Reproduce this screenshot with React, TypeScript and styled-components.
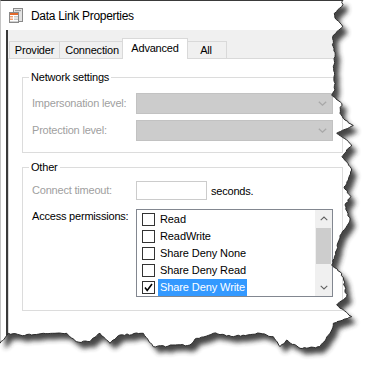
import React from "react";
import styled, { createGlobalStyle } from "styled-components";

const Global = createGlobalStyle`
  html, body { margin: 0; padding: 0; background: #fff; }
  body { font-family: "Liberation Sans", Arial, sans-serif; font-size: 11px; color: #000; }
  * { box-sizing: border-box; }
`;

const Stage = styled.div`
  position: relative;
  width: 378px;
  height: 373px;
  overflow: hidden;
  background: #fff;
`;

const Window = styled.div`
  display: flex;
  flex-direction: column;
  width: 378px;
  height: 373px;
  border-top: 1px solid #3a3a3a;
  border-left: 1px solid #c4c4c4;
  background: #fff;
`;

const TitleBar = styled.div`
  height: 29px;
  flex: none;
  display: flex;
  align-items: center;
  gap: 7px;
  padding-left: 7px;
  background: #fff;
`;

const TitleText = styled.span`
  font-size: 12px;
  letter-spacing: -0.3px;
  color: #000;
`;

const Body = styled.div`
  flex: 1;
  display: flex;
  flex-direction: column;
  margin-left: 5px;
  border-left: 2px solid #3a3a3a;
  background: #f0f0f0;
  padding-top: 8px;
`;

const TabStrip = styled.div`
  display: flex;
  align-items: flex-end;
  height: 20px;
  padding-left: 2px;
  flex: none;
`;

const Tab = styled.div<{ $active?: boolean; $w: number }>`
  position: relative;
  z-index: ${(p) => (p.$active ? 2 : 1)};
  width: ${(p) => p.$w}px;
  height: ${(p) => (p.$active ? 21 : 17)}px;
  margin-left: ${(p) => (p.$active ? -3 : -1)}px;
  margin-right: ${(p) => (p.$active ? -2 : 0)}px;
  margin-bottom: ${(p) => (p.$active ? -1 : 0)}px;
  border: 1px solid #d9d9d9;
  border-bottom: none;
  background: ${(p) => (p.$active ? "#fff" : "#f0f0f0")};
  display: flex;
  align-items: center;
  justify-content: center;
  padding-bottom: ${(p) => (p.$active ? 2 : 0)}px;
  font-size: 11px;
  letter-spacing: -0.2px;
  color: #000;
`;

const Panel = styled.div`
  flex: 1;
  background: #fff;
  border: 1px solid #d9d9d9;
  padding: 12px 0 0 13px;
`;

const Group = styled.fieldset<{ $pt: number; $pb: number; $mt?: number }>`
  width: 321px;
  min-width: 0;
  margin: ${(p) => p.$mt ?? 0}px 0 0 0;
  border: 1px solid #dcdcdc;
  padding: ${(p) => p.$pt}px 9px ${(p) => p.$pb}px 9px;
`;

const Legend = styled.legend`
  margin-left: -3px;
  padding: 0 2px;
  font-size: 11px;
  line-height: 13px;
  letter-spacing: -0.2px;
  color: #000;
`;

const FormGrid = styled.div<{ $gap: number }>`
  display: grid;
  grid-template-columns: 104px 197px;
  row-gap: ${(p) => p.$gap}px;
  align-items: center;
`;

const Label = styled.div<{ $disabled?: boolean; $top?: boolean }>`
  font-size: 11px;
  line-height: 13px;
  letter-spacing: -0.2px;
  color: ${(p) => (p.$disabled ? "#a0a0a0" : "#000")};
  align-self: ${(p) => (p.$top ? "start" : "center")};
  margin-top: ${(p) => (p.$top ? 1 : 0)}px;
  white-space: nowrap;
`;

const Combo = styled.div`
  height: 21px;
  background: #cccccc;
  border: 1px solid #c2c2c2;
  display: flex;
  align-items: center;
  justify-content: flex-end;
  padding-right: 5px;
`;

const InlineRow = styled.div`
  display: flex;
  align-items: center;
  gap: 4px;
`;

const TextBox = styled.div`
  width: 71px;
  height: 19px;
  border: 1px solid #cccccc;
  background: #fff;
`;

const Suffix = styled.span`
  font-size: 11px;
  letter-spacing: -0.2px;
  color: #000;
`;

const ListBox = styled.div`
  width: 197px;
  height: 88px;
  border: 1px solid #828790;
  background: #fff;
  display: flex;
`;

const Items = styled.div`
  flex: 1;
  padding: 1px 0 0 5px;
  display: flex;
  flex-direction: column;
`;

const Item = styled.div`
  height: 17px;
  display: flex;
  align-items: center;
`;

const CheckBox = styled.div`
  width: 13px;
  height: 13px;
  border: 1px solid #333;
  background: #fff;
  margin-right: 3px;
  display: flex;
  align-items: center;
  justify-content: center;
  flex: none;
`;

const ItemText = styled.span<{ $selected?: boolean }>`
  height: 17px;
  line-height: 17px;
  padding: 0 2px;
  font-size: 11px;
  letter-spacing: -0.1px;
  white-space: nowrap;
  background: ${(p) => (p.$selected ? "#3399ff" : "transparent")};
  color: ${(p) => (p.$selected ? "#fff" : "#000")};
`;

const ScrollBar = styled.div`
  width: 17px;
  flex: none;
  background: #f0f0f0;
  display: flex;
  flex-direction: column;
`;

const ScrollButton = styled.div`
  height: 17px;
  flex: none;
  display: flex;
  align-items: center;
  justify-content: center;
`;

const Track = styled.div`
  flex: 1;
  padding: 1px 1px 0 1px;
`;

const Thumb = styled.div`
  height: 36px;
  background: #cdcdcd;
`;

const Overlay = styled.svg`
  position: absolute;
  left: 0;
  top: 0;
  pointer-events: none;
`;

/* ---------- torn edge geometry ---------- */
const rightPts: [number, number][] = [
  [343, 0], [341.7, 6.7], [334.3, 13.3], [335, 18], [340, 23], [342.7, 26.7], [336.7, 31.7],
  [332.7, 36.7], [333.3, 46.7], [335, 56.7], [333.3, 66.7], [334, 76.7], [335, 90], [331.7, 95],
  [336, 99], [341.7, 103.3], [340, 113.3], [345, 120], [353.3, 125.5], [336.7, 133.3], [346.7, 140],
  [351.7, 145], [346.7, 150], [342, 156.7], [350, 166.7], [351.7, 170], [348.3, 180], [344, 187],
  [351, 196.7], [345, 205], [350, 220], [341.7, 233.3], [340, 238], [336.7, 250], [331.7, 265],
  [341.7, 273.3], [345, 286.7], [345, 290], [346.7, 296.7], [336.7, 305], [351.7, 316.7],
  [333.3, 323.3], [330, 333.3], [320, 346.7],
];
const bottomPts: [number, number][] = [
  [300, 348.3], [286.7, 340], [280, 346.7], [273.3, 336.7], [260, 333.3], [233.3, 336.7],
  [213.3, 333.3], [196.7, 338.3], [190, 345], [153.3, 346.7], [143.3, 333.3], [120, 335],
  [110, 343.3], [100, 333.3], [90, 341.7], [76.7, 341.7], [66.7, 333.3], [43.3, 333.3],
  [20, 335], [8.3, 333.3], [0, 343.3],
];

function buildEdge(): string {
  let seed = 7;
  const rnd = () => {
    seed = (seed * 16807) % 2147483647;
    return seed / 2147483647;
  };
  const out: [number, number][] = [];
  const pushSeg = (pts: [number, number][], axis: 0 | 1) => {
    for (let i = 0; i < pts.length - 1; i++) {
      const [x1, y1] = pts[i];
      const [x2, y2] = pts[i + 1];
      const d = Math.hypot(x2 - x1, y2 - y1);
      const n = Math.max(1, Math.ceil(d / 2.5));
      for (let k = 0; k < n; k++) {
        const t = k / n;
        let x = x1 + (x2 - x1) * t;
        let y = y1 + (y2 - y1) * t;
        if (k > 0) {
          const j = (rnd() - 0.5) * 1.8;
          if (axis === 0) x += j;
          else y += j;
        }
        out.push([x, y]);
      }
    }
  };
  pushSeg(rightPts, 0);
  pushSeg([rightPts[rightPts.length - 1], ...bottomPts], 1);
  out.push(bottomPts[bottomPts.length - 1]);
  return out.map(([x, y], i) => `${i === 0 ? "M" : "L"}${x.toFixed(1)},${y.toFixed(1)}`).join(" ");
}

const edgeLine = buildEdge();
const shape = `M0,0 ${edgeLine.replace(/^M/, "L")} L0,0 Z`;
const outer = "M-5,-5 H390 V390 H-5 Z ";

const TornEdge = () => (
  <Overlay width={378} height={373} viewBox="0 0 378 373">
    <defs>
      <clipPath id="outsideClip">
        <path d={outer + shape} clipRule="evenodd" />
      </clipPath>
      <filter id="shadowBlur" x="-20%" y="-20%" width="140%" height="140%">
        <feGaussianBlur stdDeviation="2.4" />
      </filter>
    </defs>
    <path d={outer + shape} fill="#fff" fillRule="evenodd" />
    <g clipPath="url(#outsideClip)">
      <path d={shape} transform="translate(5,6)" fill="#333" opacity={0.9} filter="url(#shadowBlur)" />
    </g>
    <path d={edgeLine} fill="none" stroke="#2a2a2a" strokeWidth={1} />
  </Overlay>
);

/* ---------- icons ---------- */
const AppIcon = () => (
  <svg width="16" height="16" viewBox="0 0 16 16">
    <rect x="5.5" y="0.5" width="9" height="13" fill="#e4e4e4" stroke="#8a8a8a" />
    <rect x="7" y="2" width="6" height="1.2" fill="#9a9a9a" />
    <rect x="1.5" y="4.5" width="9" height="10" fill="#fff" stroke="#8a8a8a" />
    <rect x="2" y="5" width="8" height="2" fill="#e2692b" />
    <rect x="2" y="8" width="3" height="1.5" fill="#f0a070" />
    <rect x="2" y="10.5" width="3" height="1.5" fill="#f0a070" />
    <rect x="6" y="8" width="4" height="1.5" fill="#c8c8c8" />
    <rect x="6" y="10.5" width="4" height="1.5" fill="#c8c8c8" />
    <rect x="2" y="13" width="8" height="1" fill="#d0d0d0" />
  </svg>
);

const Chevron = ({ up, color, w = 9 }: { up?: boolean; color: string; w?: number }) => (
  <svg width={w} height="5" viewBox="0 0 9 5">
    <path d={up ? "M0.8,4.3 L4.5,0.8 L8.2,4.3" : "M0.8,0.7 L4.5,4.2 L8.2,0.7"} fill="none" stroke={color} strokeWidth="1.2" />
  </svg>
);

const Tick = () => (
  <svg width="11" height="11" viewBox="0 0 11 11">
    <path d="M2,5.6 L4.2,8.4 L9,2" fill="none" stroke="#000" strokeWidth="1.6" />
  </svg>
);

const permissions = [
  { label: "Read", checked: false },
  { label: "ReadWrite", checked: false },
  { label: "Share Deny None", checked: false },
  { label: "Share Deny Read", checked: false },
  { label: "Share Deny Write", checked: true },
];

const tabs = [
  { label: "Provider", w: 51 },
  { label: "Connection", w: 66 },
  { label: "Advanced", w: 66, active: true },
  { label: "All", w: 42 },
];

export default function App() {
  return (
    <Stage>
      <Global />
      <Window>
        <TitleBar>
          <AppIcon />
          <TitleText>Data Link Properties</TitleText>
        </TitleBar>
        <Body>
          <TabStrip>
            {tabs.map((t) => (
              <Tab key={t.label} $w={t.w} $active={t.active}>
                {t.label}
              </Tab>
            ))}
          </TabStrip>
          <Panel>
            <Group $pt={9} $pb={11}>
              <Legend>Network settings</Legend>
              <FormGrid $gap={6}>
                <Label $disabled>Impersonation level:</Label>
                <Combo>
                  <Chevron color="#a8a8a8" />
                </Combo>
                <Label $disabled>Protection level:</Label>
                <Combo>
                  <Chevron color="#a8a8a8" />
                </Combo>
              </FormGrid>
            </Group>
            <Group $pt={7} $pb={13} $mt={8}>
              <Legend>Other</Legend>
              <FormGrid $gap={9}>
                <Label $disabled>Connect timeout:</Label>
                <InlineRow>
                  <TextBox />
                  <Suffix>seconds.</Suffix>
                </InlineRow>
                <Label $top>Access permissions:</Label>
                <ListBox>
                  <Items>
                    {permissions.map((p) => (
                      <Item key={p.label}>
                        <CheckBox>{p.checked && <Tick />}</CheckBox>
                        <ItemText $selected={p.checked}>{p.label}</ItemText>
                      </Item>
                    ))}
                  </Items>
                  <ScrollBar>
                    <ScrollButton>
                      <Chevron up color="#606060" w={8} />
                    </ScrollButton>
                    <Track>
                      <Thumb />
                    </Track>
                    <ScrollButton>
                      <Chevron color="#606060" w={8} />
                    </ScrollButton>
                  </ScrollBar>
                </ListBox>
              </FormGrid>
            </Group>
          </Panel>
        </Body>
      </Window>
      <TornEdge />
    </Stage>
  );
}
